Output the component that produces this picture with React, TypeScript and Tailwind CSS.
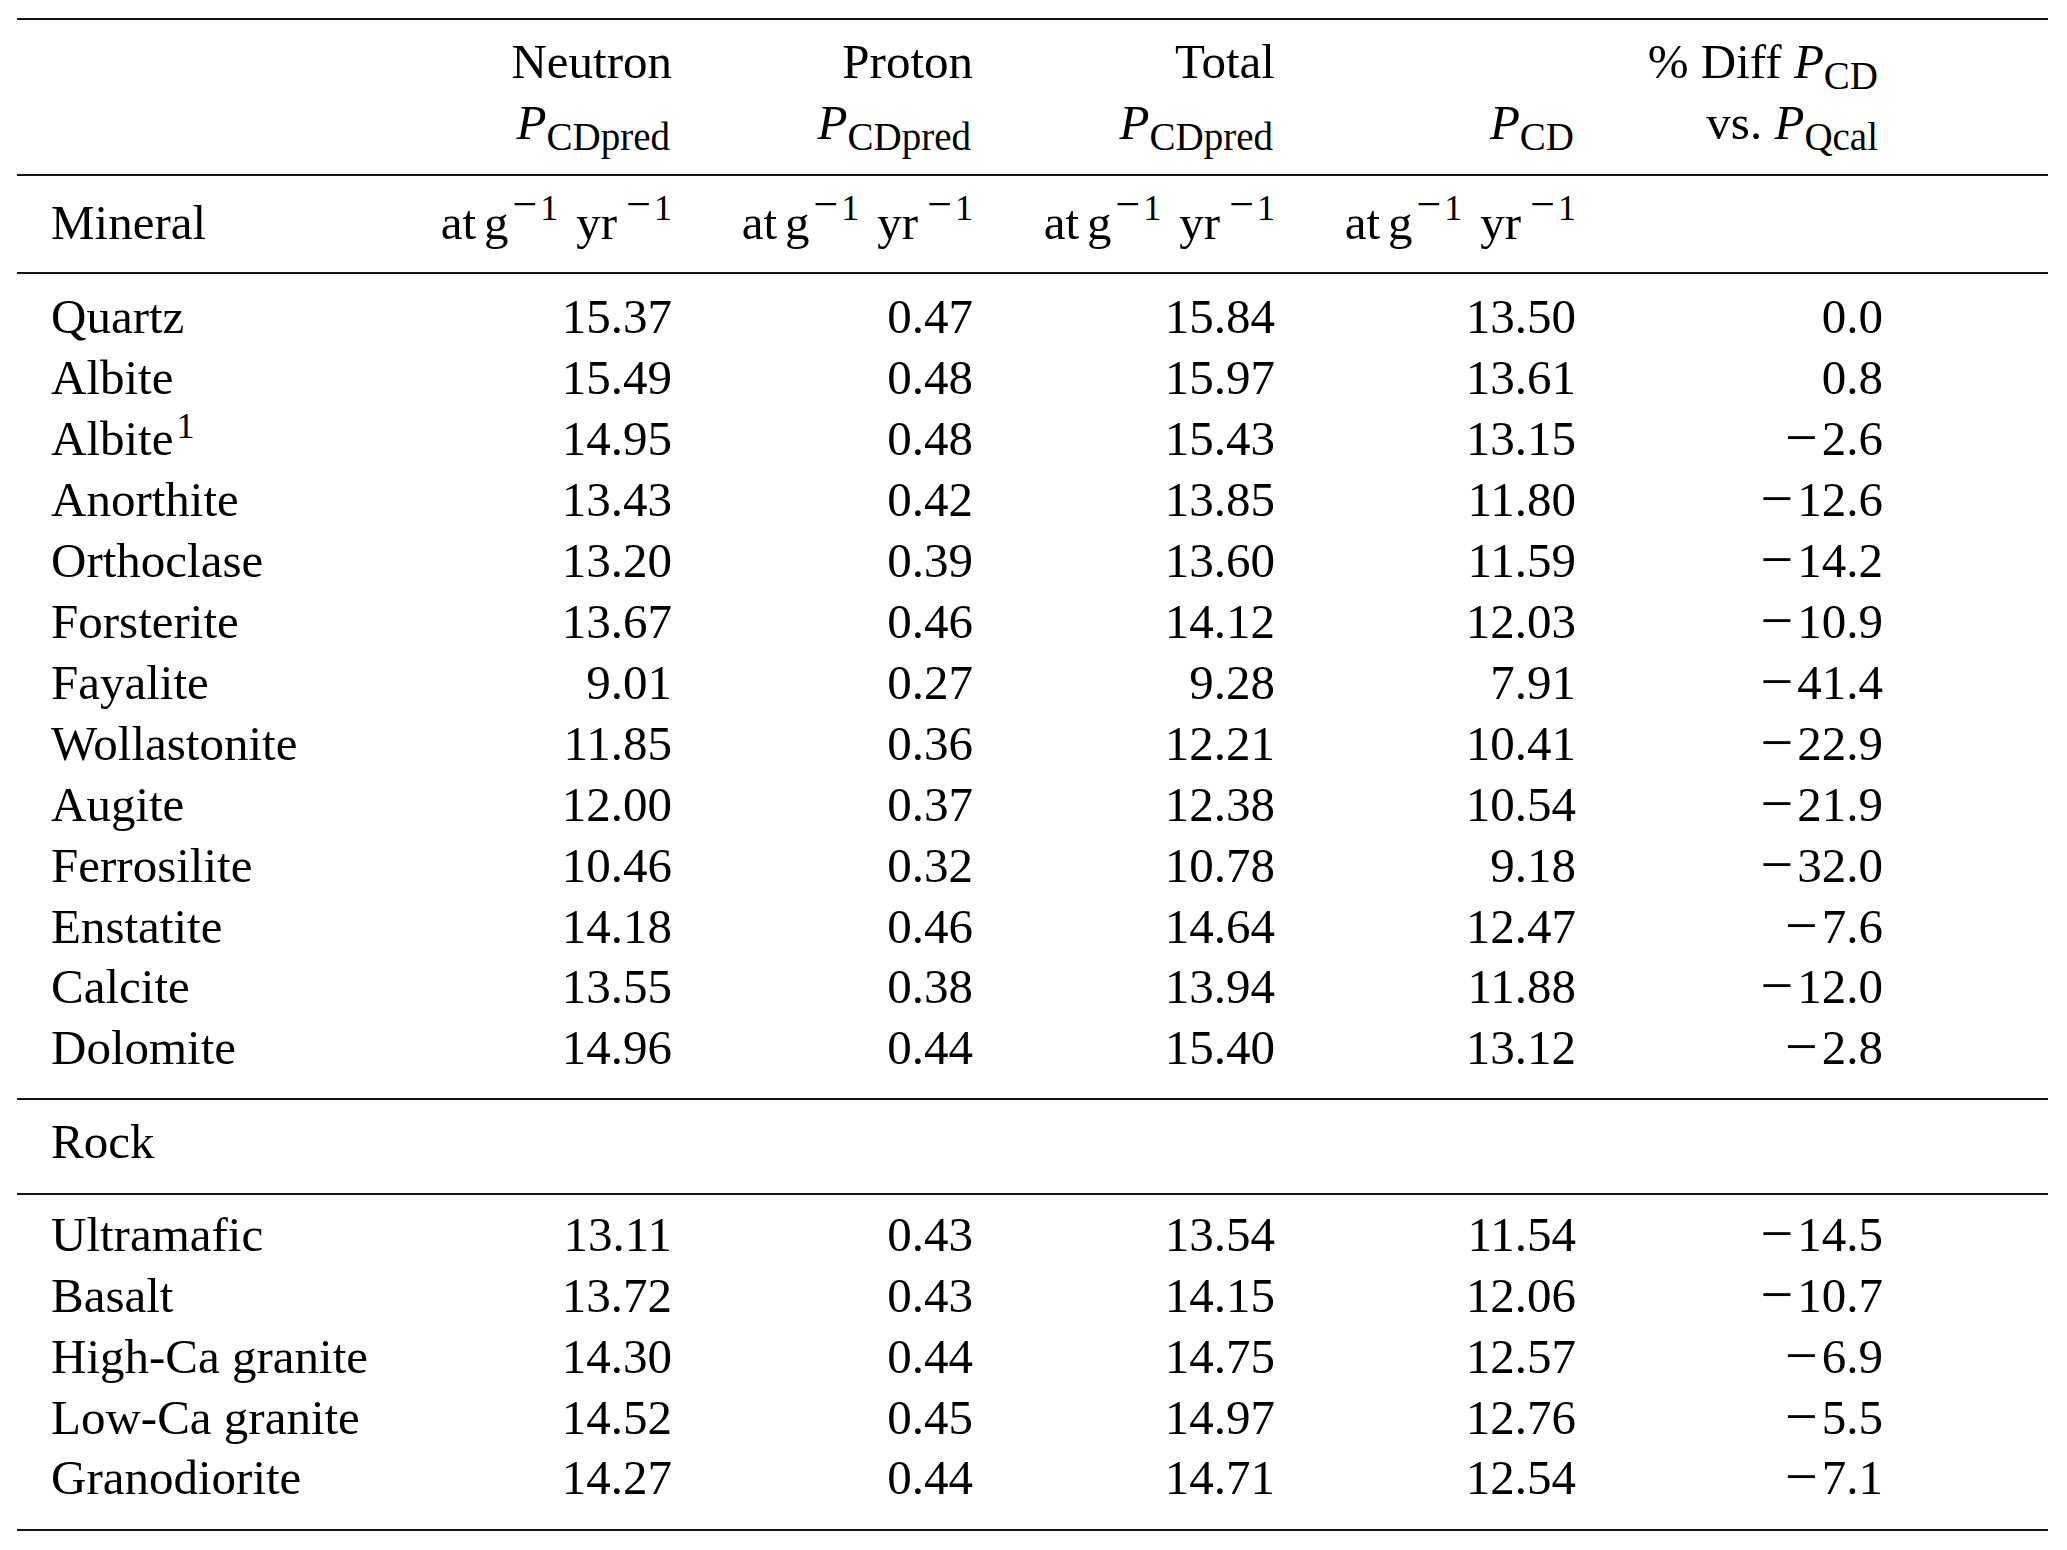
import type { ReactNode } from "react";

// ---------------------------- data ----------------------------
type Row = [string, string, string, string, string, string];

const minerals: Row[] = [
  ["Quartz", "15.37", "0.47", "15.84", "13.50", "0.0"],
  ["Albite", "15.49", "0.48", "15.97", "13.61", "0.8"],
  ["Albite¹", "14.95", "0.48", "15.43", "13.15", "−2.6"],
  ["Anorthite", "13.43", "0.42", "13.85", "11.80", "−12.6"],
  ["Orthoclase", "13.20", "0.39", "13.60", "11.59", "−14.2"],
  ["Forsterite", "13.67", "0.46", "14.12", "12.03", "−10.9"],
  ["Fayalite", "9.01", "0.27", "9.28", "7.91", "−41.4"],
  ["Wollastonite", "11.85", "0.36", "12.21", "10.41", "−22.9"],
  ["Augite", "12.00", "0.37", "12.38", "10.54", "−21.9"],
  ["Ferrosilite", "10.46", "0.32", "10.78", "9.18", "−32.0"],
  ["Enstatite", "14.18", "0.46", "14.64", "12.47", "−7.6"],
  ["Calcite", "13.55", "0.38", "13.94", "11.88", "−12.0"],
  ["Dolomite", "14.96", "0.44", "15.40", "13.12", "−2.8"],
];

const rocks: Row[] = [
  ["Ultramafic", "13.11", "0.43", "13.54", "11.54", "−14.5"],
  ["Basalt", "13.72", "0.43", "14.15", "12.06", "−10.7"],
  ["High-Ca granite", "14.30", "0.44", "14.75", "12.57", "−6.9"],
  ["Low-Ca granite", "14.52", "0.45", "14.97", "12.76", "−5.5"],
  ["Granodiorite", "14.27", "0.44", "14.71", "12.54", "−7.1"],
];

// column boxes (label + five right-aligned value columns)
const COL0 = "w-[355px] shrink-0 pl-[34px] whitespace-nowrap";
const COL1 = "w-[300px] shrink-0 text-right whitespace-nowrap";
const COL2 = "w-[301px] shrink-0 text-right whitespace-nowrap";
const COL3 = "w-[302px] shrink-0 text-right whitespace-nowrap";
const COL4 = "w-[301px] shrink-0 text-right whitespace-nowrap";
const COL5 = "w-[307px] shrink-0 text-right whitespace-nowrap";

// ---------------------------- bits ----------------------------
function Sub({ children }: { children: ReactNode }) {
  return <span className="text-[39px] leading-[0] align-[-11px]">{children}</span>;
}

// italic P with upright subscript, as in the math header
function Pvar({ sub }: { sub: string }) {
  return (
    <span>
      <i className="italic">P</i>
      <Sub>{sub}</Sub>
    </span>
  );
}

// math minus is longer than the text one
function Num({ v }: { v: string }) {
  if (!v.startsWith("−")) return <>{v}</>;
  return (
    <>
      <span className="text-[58px] leading-[0] align-[-2px] mr-[4px]">−</span>
      {v.slice(1)}
    </>
  );
}

// superscript "−1"
function NegOne({ className }: { className: string }) {
  return (
    <span className={`text-[36px] leading-[0] align-[19px] ${className}`}>
      <span className="text-[44px] align-[1px]">−</span>
      <span className="ml-[3px]">1</span>
    </span>
  );
}

function Unit() {
  return (
    <span>
      at<span className="ml-[8px]">g</span>
      <NegOne className="ml-[4px]" />
      <span className="ml-[18px]">yr</span>
      <NegOne className="ml-[9px]" />
    </span>
  );
}

function Label({ text }: { text: string }) {
  if (text.endsWith("¹")) {
    return (
      <span>
        {text.slice(0, -1)}
        <span className="text-[36px] leading-[0] align-[17px] pl-[3px]">1</span>
      </span>
    );
  }
  return <span>{text}</span>;
}

function DataRow({ row }: { row: Row }) {
  return (
    <div className="flex">
      <div className={COL0}>
        <Label text={row[0]} />
      </div>
      <div className={COL1}>{row[1]}</div>
      <div className={COL2}>{row[2]}</div>
      <div className={COL3}>{row[3]}</div>
      <div className={COL4}>{row[4]}</div>
      <div className={COL5}>
        <Num v={row[5]} />
      </div>
    </div>
  );
}

// ---------------------------- page ----------------------------
export default function App() {
  return (
    <div className="min-h-screen bg-white text-black font-['Liberation_Serif','Times_New_Roman',serif] text-[49px]">
      <div className="pt-[18px] pl-[17px]">
        <div className="w-[2031px]">
          {/* column headings */}
          <div className="border-t-2 border-[#161616] pt-[11px] pb-[21px] leading-[61px]">
            <div className="flex">
              <div className={COL0} />
              <div className={COL1}>Neutron</div>
              <div className={COL2}>Proton</div>
              <div className={COL3}>Total</div>
              <div className={COL4} />
              <div className={`${COL5} pr-[5px]`}>
                % Diff <Pvar sub="CD" />
              </div>
            </div>
            <div className="flex">
              <div className={COL0} />
              <div className={`${COL1} pr-[2px]`}>
                <Pvar sub="CDpred" />
              </div>
              <div className={`${COL2} pr-[2px]`}>
                <Pvar sub="CDpred" />
              </div>
              <div className={`${COL3} pr-[2px]`}>
                <Pvar sub="CDpred" />
              </div>
              <div className={`${COL4} pr-[2px]`}>
                <Pvar sub="CD" />
              </div>
              <div className={`${COL5} pr-[5px]`}>
                vs. <Pvar sub="Qcal" />
              </div>
            </div>
          </div>

          {/* units */}
          <div className="border-t-2 border-[#161616] pt-[16px] pb-[19px] leading-[61px]">
            <div className="flex">
              <div className={COL0}>Mineral</div>
              <div className={COL1}>
                <Unit />
              </div>
              <div className={COL2}>
                <Unit />
              </div>
              <div className={COL3}>
                <Unit />
              </div>
              <div className={COL4}>
                <Unit />
              </div>
              <div className={COL5} />
            </div>
          </div>

          {/* minerals */}
          <div className="border-t-2 border-[#161616] pt-[13px] pb-[19px] leading-[60.95px]">
            {minerals.map((row) => (
              <DataRow key={row[0]} row={row} />
            ))}
          </div>

          {/* rock heading */}
          <div className="border-t-2 border-[#161616] pt-[11px] pb-[21px] leading-[61px]">
            <div className={COL0}>Rock</div>
          </div>

          {/* rocks */}
          <div className="border-y-2 border-[#161616] pt-[10px] pb-[20px] leading-[60.75px]">
            {rocks.map((row) => (
              <DataRow key={row[0]} row={row} />
            ))}
          </div>
        </div>
      </div>
    </div>
  );
}
